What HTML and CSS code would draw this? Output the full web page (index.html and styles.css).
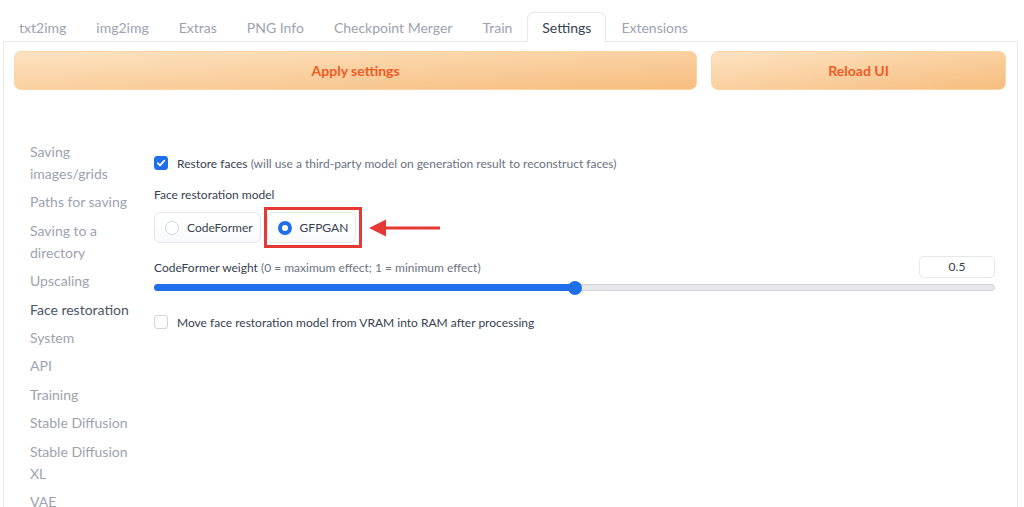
FILE: index.html
```html
<!DOCTYPE html>
<html>
<head>
<meta charset="utf-8">
<link rel="stylesheet" href="styles.css">
</head>
<body>
<div class="tabs">
  <div class="tab">txt2img</div>
  <div class="tab">img2img</div>
  <div class="tab">Extras</div>
  <div class="tab">PNG Info</div>
  <div class="tab">Checkpoint Merger</div>
  <div class="tab">Train</div>
  <div class="tab active">Settings</div>
  <div class="tab">Extensions</div>
</div>
<div class="panel">
  <div class="buttons">
    <div class="btn apply">Apply settings</div>
    <div class="btn reload">Reload UI</div>
  </div>
  <div class="settings">
    <div class="sidebar">
      <div class="nav">Saving images/grids</div>
      <div class="nav">Paths for saving</div>
      <div class="nav">Saving to a directory</div>
      <div class="nav">Upscaling</div>
      <div class="nav current">Face restoration</div>
      <div class="nav">System</div>
      <div class="nav">API</div>
      <div class="nav">Training</div>
      <div class="nav">Stable Diffusion</div>
      <div class="nav">Stable Diffusion XL</div>
      <div class="nav">VAE</div>
    </div>
    <div class="main">
      <div class="check-row">
        <span class="checkbox checked">
          <svg width="10" height="10" viewBox="0 0 10 10"><path d="M1.8 5.2 L4 7.3 L8.3 2.7" fill="none" stroke="#fff" stroke-width="1.7" stroke-linecap="round" stroke-linejoin="round"/></svg>
        </span>
        <span class="label">Restore faces <span class="hint">(will use a third-party model on generation result to reconstruct faces)</span></span>
      </div>
      <div class="field-label">Face restoration model</div>
      <div class="radio-row">
        <div class="radio-item"><span class="radio"></span>CodeFormer</div>
        <div class="highlight">
          <div class="radio-item"><span class="radio on"></span>GFPGAN</div>
        </div>
        <svg class="arrow" width="71" height="20" viewBox="0 0 71 20"><path d="M14 10 H71" stroke="#e53935" stroke-width="3"/><path d="M0 10 L17 1.5 L17 18.5 Z" fill="#e53935"/></svg>
      </div>
      <div class="slider-head">
        <span class="label">CodeFormer weight <span class="hint">(0 = maximum effect; 1 = minimum effect)</span></span>
        <div class="num">0.5</div>
      </div>
      <div class="track"><div class="fill" style="width: 50%"></div><div class="thumb" style="left: 50%"></div></div>
      <div class="check-row second">
        <span class="checkbox"></span>
        <span class="label">Move face restoration model from VRAM into RAM after processing</span>
      </div>
    </div>
  </div>
</div>
</body>
</html>
```
FILE: styles.css
```css
* { box-sizing: border-box; }
html, body { margin: 0; padding: 0; background: #fff; }
body {
  font-family: "Lato", "Liberation Sans", sans-serif;
  color: #374151;
  width: 1024px;
  height: 507px;
  overflow: hidden;
}
.tabs {
  display: flex;
  align-items: flex-end;
  height: 41px;
  padding-left: 4px;
}
.tab {
  padding: 0 14px;
  height: 30px;
  line-height: 30px;
  font-size: 14px;
  color: #9ca3af;
  border: 1px solid transparent;
  border-bottom: none;
  margin-bottom: -1px;
}
.tab.active {
  color: #374151;
  background: #fff;
  border-color: #e5e7eb;
  border-radius: 7px 7px 0 0;
  position: relative;
  z-index: 1;
}
.panel {
  margin: 0 6px 0 3px;
  border: 1px solid #e5e7eb;
  border-bottom: none;
  height: 466px;
  padding: 9px 11px 0 10px;
}
.buttons {
  display: flex;
  gap: 14px;
}
.btn {
  height: 39px;
  border-radius: 7px;
  border: 1px solid #fbd5a8;
  background: linear-gradient(to bottom right, #fde3c2, #f7bd7e);
  color: #ef5b25;
  font-weight: 700;
  font-size: 14px;
  display: flex;
  align-items: center;
  justify-content: center;
}
.apply { flex: 684; }
.reload { flex: 294; }
.settings {
  display: flex;
  padding-top: 51px;
}
.sidebar {
  width: 140px;
  padding-left: 16px;
  flex: none;
}
.nav {
  font-size: 14px;
  line-height: 22px;
  color: #9ca3af;
  width: 100px;
  margin-bottom: 6.4px;
}
.nav.current { color: #4b5563; }
.main {
  flex: 1;
  padding-top: 15px;
}
.check-row {
  display: flex;
  align-items: center;
  gap: 9px;
  height: 14px;
}
.checkbox {
  width: 14px;
  height: 14px;
  border-radius: 3px;
  border: 1px solid #d1d5db;
  background: #fff;
  display: flex;
  align-items: center;
  justify-content: center;
  flex: none;
}
.checkbox.checked {
  background: #1f6feb;
  border-color: #1f6feb;
}
.label {
  font-size: 12px;
  color: #374151;
}
.hint { color: #6b7280; }
.field-label {
  font-size: 12px;
  margin-top: 18px;
  line-height: 14px;
}
.radio-row {
  display: flex;
  align-items: center;
  margin-top: 5px;
  height: 41px;
}
.radio-item {
  display: flex;
  align-items: center;
  gap: 8px;
  font-size: 12px;
  color: #374151;
  height: 31px;
  padding: 0 7px 0 10px;
  border: 1px solid #e5e7eb;
  border-radius: 6px;
  background: linear-gradient(to bottom, #ffffff, #f9fafb);
}
.highlight {
  border: 3px solid #e53935;
  padding: 2px 3px 2px 0;
  margin-left: 3px;
  height: 41px;
}
.radio {
  width: 14px;
  height: 14px;
  border-radius: 50%;
  border: 1px solid #d1d5db;
  background: #fff;
}
.radio.on {
  border: 4px solid #1f6feb;
}
.arrow { margin-left: 7px; }
.slider-head {
  display: flex;
  justify-content: space-between;
  align-items: center;
  margin-top: 8px;
  padding-right: 11px;
}
.num {
  width: 76px;
  height: 22px;
  border: 1px solid #e5e7eb;
  border-radius: 5px;
  font-size: 12px;
  text-align: center;
  line-height: 20px;
}
.track {
  position: relative;
  height: 7px;
  margin: 6px 11px 0 0;
  background: #e5e7eb;
  border: 1px solid #d1d5db;
  border-radius: 4px;
}
.fill {
  position: absolute;
  left: -1px; top: -1px; bottom: -1px;
  background: #1f6feb;
  border-radius: 4px 0 0 4px;
}
.thumb {
  position: absolute;
  top: 50%;
  width: 14px;
  height: 14px;
  margin: -7px 0 0 -7px;
  border-radius: 50%;
  background: #1f6feb;
}
.check-row.second { margin-top: 24px; }
```
